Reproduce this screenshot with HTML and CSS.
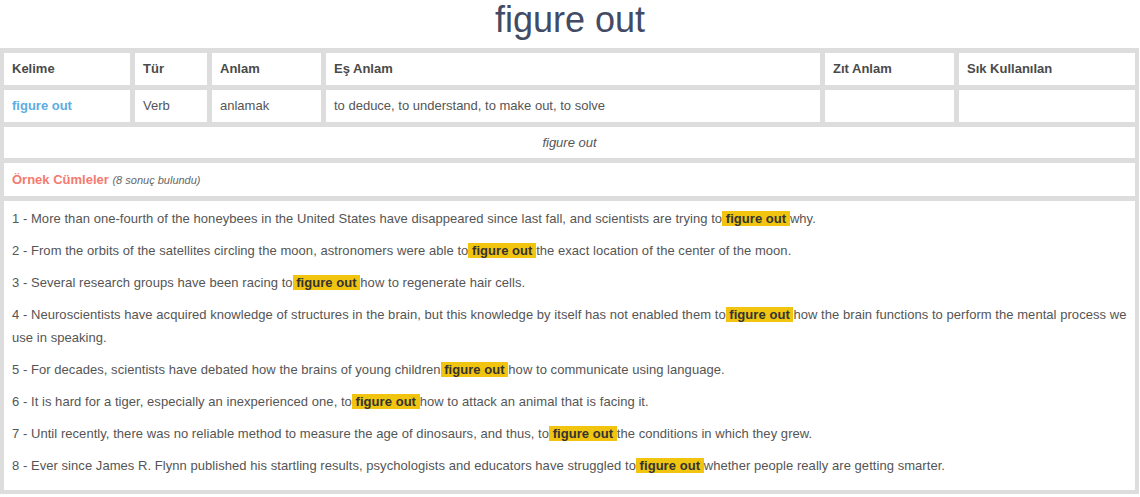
FILE: index.html
```html
<!DOCTYPE html>
<html lang="tr">
<head>
<meta charset="utf-8">
<title>figure out</title>
<link rel="stylesheet" href="styles.css">
</head>
<body>
<h1 class="title">figure out</h1>
<div class="board">
  <div class="cell head">Kelime</div>
  <div class="cell head">Tür</div>
  <div class="cell head">Anlam</div>
  <div class="cell head">Eş Anlam</div>
  <div class="cell head">Zıt Anlam</div>
  <div class="cell head">Sık Kullanılan</div>

  <div class="cell"><a class="word" href="#">figure out</a></div>
  <div class="cell">Verb</div>
  <div class="cell">anlamak</div>
  <div class="cell">to deduce, to understand, to make out, to solve</div>
  <div class="cell"></div>
  <div class="cell"></div>

  <div class="cell full center"><em>figure out</em></div>

  <div class="cell full"><span class="examples">Örnek Cümleler</span>&nbsp;<em class="count">(8 sonuç bulundu)</em></div>

  <div class="cell full sentences">
    <p>1 - More than one-fourth of the honeybees in the United States have disappeared since last fall, and scientists are trying to<b class="hl"> figure out </b>why.</p>
    <p>2 - From the orbits of the satellites circling the moon, astronomers were able to<b class="hl"> figure out </b>the exact location of the center of the moon.</p>
    <p>3 - Several research groups have been racing to<b class="hl"> figure out </b>how to regenerate hair cells.</p>
    <p>4 - Neuroscientists have acquired knowledge of structures in the brain, but this knowledge by itself has not enabled them to<b class="hl"> figure out </b>how the brain functions to perform the mental process we use in speaking.</p>
    <p>5 - For decades, scientists have debated how the brains of young children<b class="hl"> figure out </b>how to communicate using language.</p>
    <p>6 - It is hard for a tiger, especially an inexperienced one, to<b class="hl"> figure out </b>how to attack an animal that is facing it.</p>
    <p>7 - Until recently, there was no reliable method to measure the age of dinosaurs, and thus, to<b class="hl"> figure out </b>the conditions in which they grew.</p>
    <p>8 - Ever since James R. Flynn published his startling results, psychologists and educators have struggled to<b class="hl"> figure out </b>whether people really are getting smarter.</p>
  </div>
</div>
</body>
</html>
```
FILE: styles.css
```css
html, body {
  margin: 0;
  padding: 0;
  background: #ffffff;
}
body {
  font-family: "Liberation Sans", Arial, sans-serif;
  font-size: 13px;
  color: #555555;
}
.title {
  margin: 0 0 8px;
  font-size: 36px;
  line-height: 40px;
  font-weight: normal;
  text-align: center;
  color: #424b63;
}
.board {
  width: 1139px;
  box-sizing: border-box;
  background: #dddddd;
  padding: 5px 4px 4px;
  display: grid;
  grid-template-columns: 126px 72px 109px 494px 129px 176px;
  grid-template-rows: 32px 32px 31px 33px auto;
  gap: 5px;
}
.cell {
  background: #ffffff;
  padding: 0 8px;
  display: flex;
  align-items: center;
  line-height: 16px;
}
.head {
  font-weight: bold;
  color: #4a4a4a;
}
.word {
  color: #5dade2;
  font-weight: bold;
  text-decoration: none;
}
.full {
  grid-column: 1 / -1;
}
.center {
  justify-content: center;
}
.examples {
  color: #f47a6f;
  font-weight: bold;
}
.count {
  font-size: 11px;
  color: #666666;
}
.sentences {
  display: block;
  padding: 6px 5px 4px 8px;
  letter-spacing: 0.05px;
}
.sentences p {
  margin: 0 0 9px;
  line-height: 23px;
}
.hl {
  background: #f1c40f;
  color: #333333;
  font-weight: bold;
}
```
